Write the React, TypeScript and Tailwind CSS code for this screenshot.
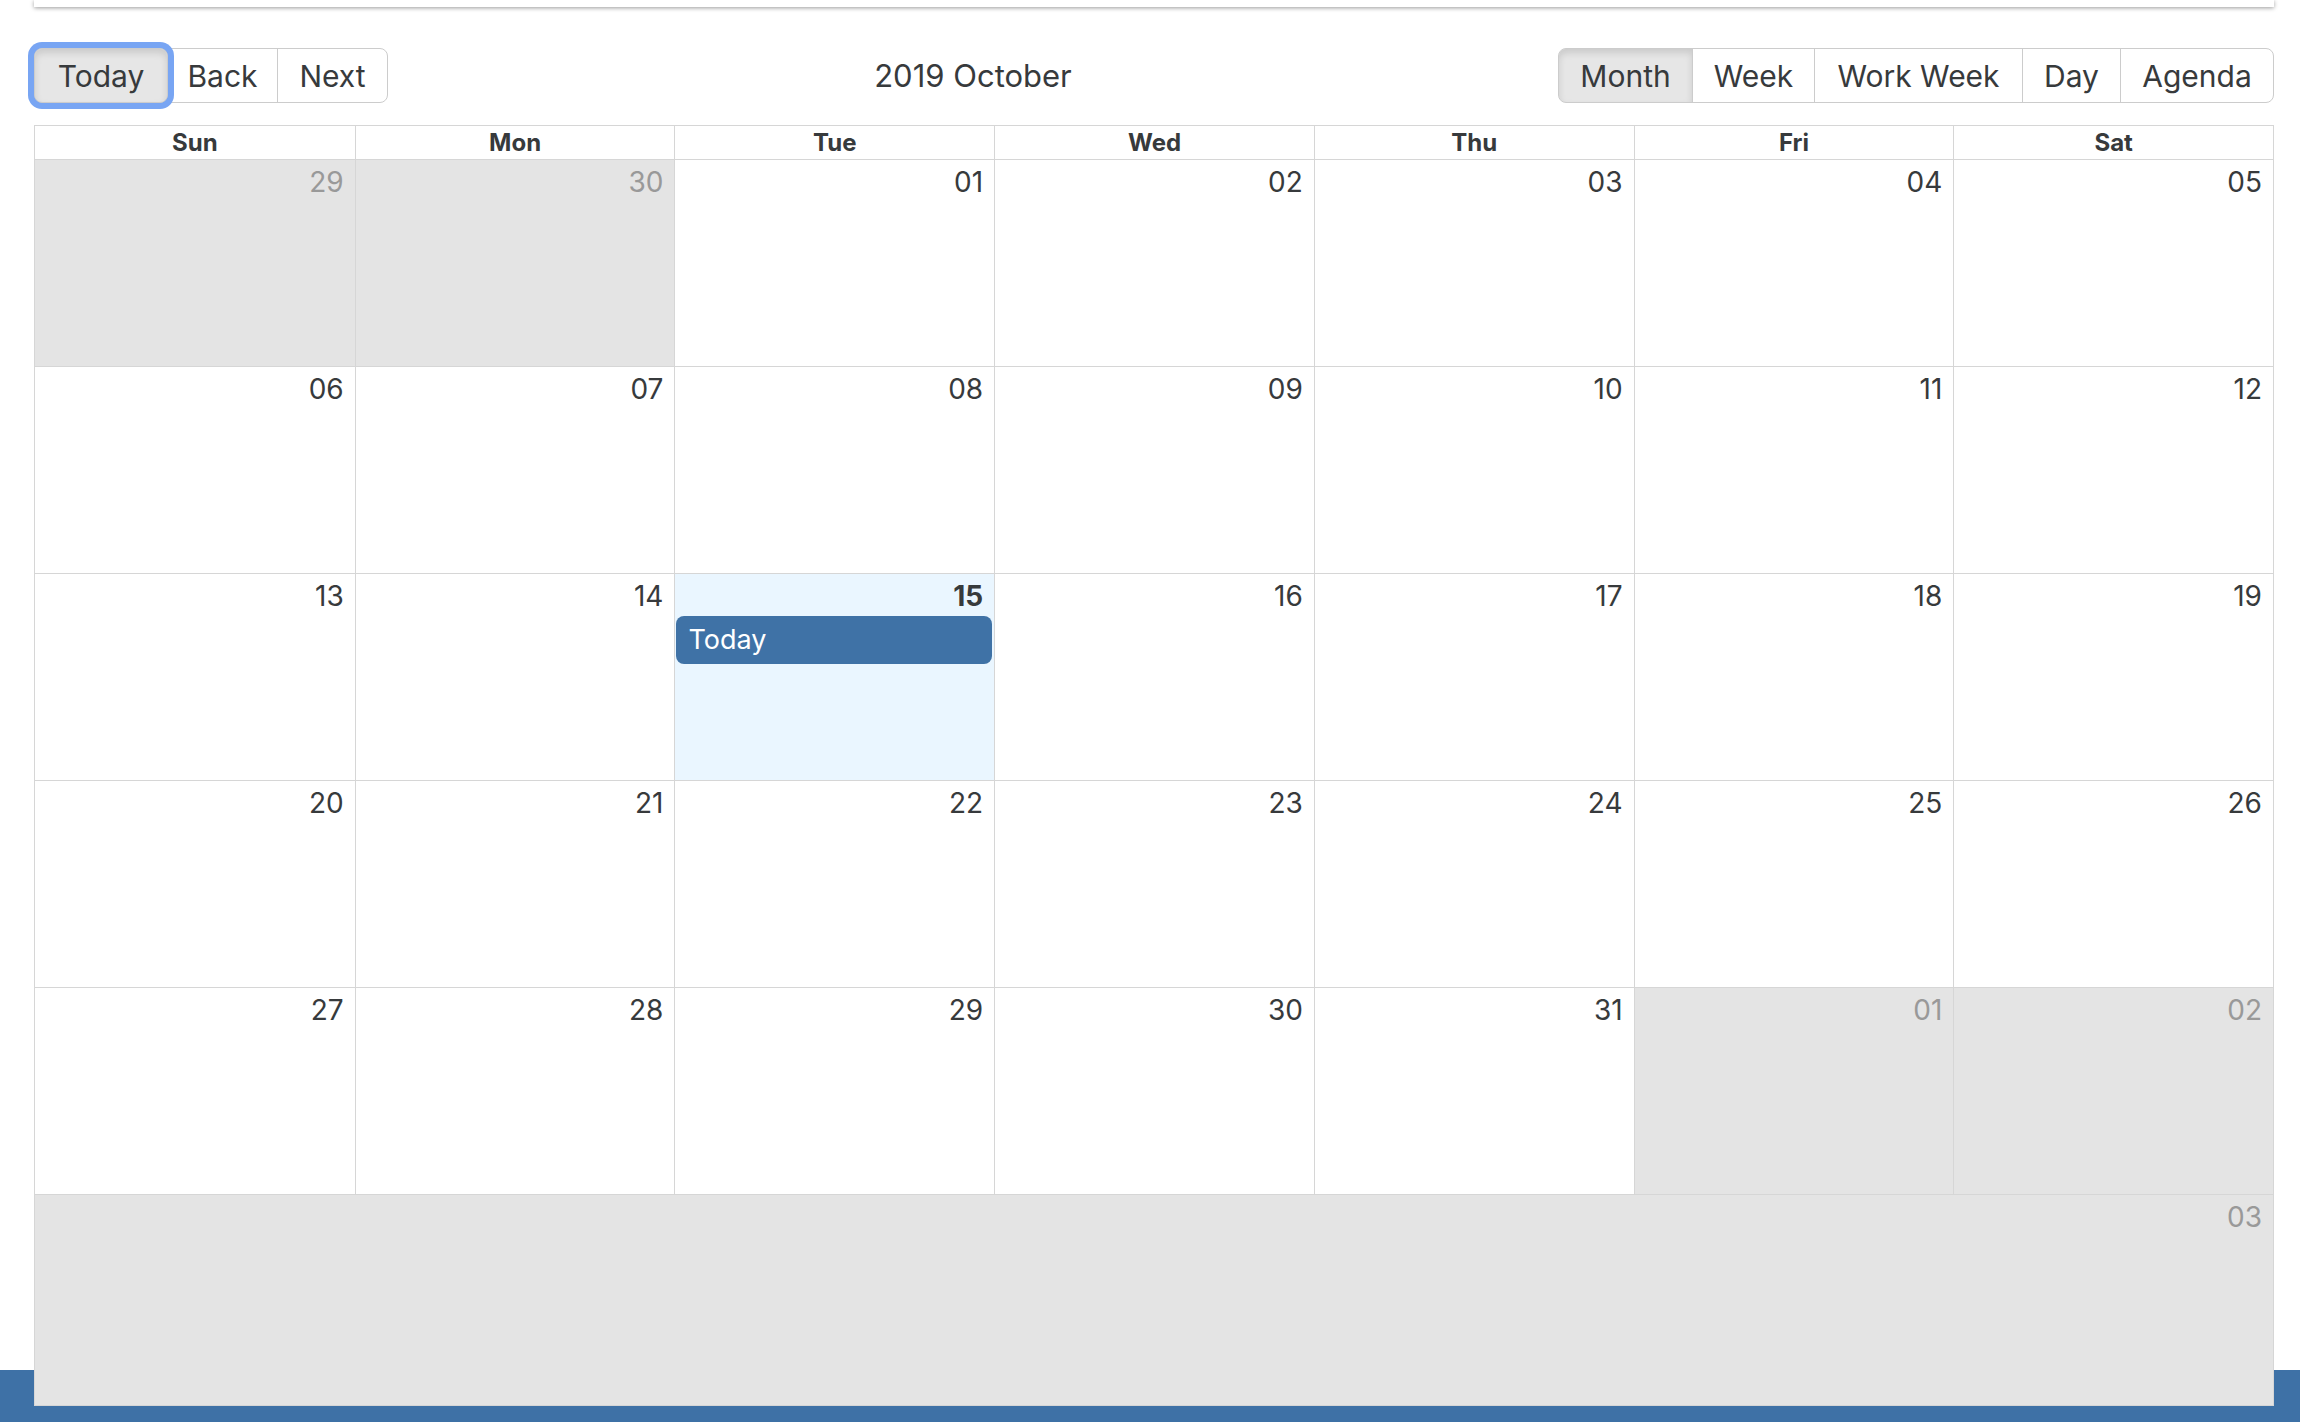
import clsx from 'clsx';

type Day = { label: string; offRange?: boolean; today?: boolean; event?: string };

const weekdays = ['Sun', 'Mon', 'Tue', 'Wed', 'Thu', 'Fri', 'Sat'];

const pad = (n: number) => String(n).padStart(2, '0');

// October 2019 laid out Sun..Sat, with the leading/trailing days of the neighbour months
function buildWeeks(): Day[][] {
  const days: Day[] = [{ label: '29', offRange: true }, { label: '30', offRange: true }];
  for (let d = 1; d <= 31; d++) {
    days.push(d === 15 ? { label: pad(d), today: true, event: 'Today' } : { label: pad(d) });
  }
  days.push({ label: '01', offRange: true }, { label: '02', offRange: true });
  const weeks: Day[][] = [];
  for (let i = 0; i < days.length; i += 7) weeks.push(days.slice(i, i + 7));
  return weeks;
}

const leftButtons = [
  { label: 'Today', width: 'w-[134px]', active: true },
  { label: 'Back', width: 'w-[111px]' },
  { label: 'Next', width: 'w-[111px]' },
];

const viewButtons = [
  { label: 'Month', width: 'w-[135px]', active: true },
  { label: 'Week', width: 'w-[123px]' },
  { label: 'Work Week', width: 'w-[209px]' },
  { label: 'Day', width: 'w-[99px]' },
  { label: 'Agenda', width: 'w-[154px]' },
];

function ButtonGroup({ items, focused }: { items: typeof viewButtons; focused?: string }) {
  return (
    <div className="flex">
      {items.map((item, i) => (
        <button
          key={item.label}
          type="button"
          className={clsx(
            'relative h-[55px] border border-[#cccccc] text-center text-[30px] leading-none text-[#373a3c]',
            item.width,
            i > 0 && '-ml-px',
            i === 0 && 'rounded-l-[8px]',
            i === items.length - 1 && 'rounded-r-[8px]',
            item.active && 'border-[#adadad] bg-[#e6e6e6] shadow-[inset_0_4px_7px_rgba(0,0,0,0.12)]',
            focused === item.label && 'z-10 rounded-[8px] ring-[6px] ring-[#78a5f3]'
          )}
        >
          {item.label}
        </button>
      ))}
    </div>
  );
}

export default function App() {
  const weeks = buildWeeks();

  return (
    <div
      className="h-[1422px] w-[2300px] overflow-hidden bg-white text-[#373a3c]"
      style={{ fontFamily: 'Inter, "Open Sans", sans-serif' }}
    >
      <div className="ml-[34px] h-[7px] w-[2240px] bg-white shadow-[0_1px_4px_rgba(0,0,0,0.4)]" />

      <div className="ml-[34px] mt-[41px] flex h-[55px] w-[2240px] items-center">
        <ButtonGroup items={leftButtons} focused="Today" />
        <div className="flex-1 px-[10px] pt-[2px] text-center text-[31px]">2019 October</div>
        <ButtonGroup items={viewButtons} />
      </div>

      <div className="relative z-10 ml-[34px] mt-[22px] w-[2240px] border-x border-[#d6d6d6] bg-white">
        <div className="grid h-[35px] grid-cols-7 border-y border-[#d6d6d6]">
          {weekdays.map((name, i) => (
            <div
              key={name}
              className={clsx('text-center text-[24px] font-bold leading-[33px]', i > 0 && 'border-l border-[#d6d6d6]')}
            >
              {name}
            </div>
          ))}
        </div>

        {weeks.map((week, w) => (
          <div key={w} className="grid h-[207px] grid-cols-7 border-b border-[#d6d6d6]">
            {week.map((day, i) => (
              <div
                key={day.label + i}
                className={clsx(
                  i > 0 && 'border-l border-[#d6d6d6]',
                  day.offRange && 'bg-[#e4e4e4]',
                  day.today && 'bg-[#eaf6ff]'
                )}
              >
                <div
                  className={clsx(
                    'pr-[11px] pt-[3px] text-right text-[28px] leading-[39px]',
                    day.offRange && 'text-[#999999]',
                    day.today && 'font-bold'
                  )}
                >
                  {day.label}
                </div>
                {day.event && (
                  <div className="ml-px mr-[2px] h-[48px] rounded-[8px] bg-[#3f72a6] pl-[12px] text-[27px] leading-[48px] text-white">
                    {day.event}
                  </div>
                )}
              </div>
            ))}
          </div>
        ))}

        <div className="h-[211px] border-b border-[#d6d6d6] bg-[#e4e4e4]">
          <div className="pr-[11px] pt-[3px] text-right text-[28px] leading-[39px] text-[#999999]">03</div>
        </div>
      </div>

      <div className="-mt-[36px] h-[52px] w-full bg-[#3e71a6]" />
    </div>
  );
}
